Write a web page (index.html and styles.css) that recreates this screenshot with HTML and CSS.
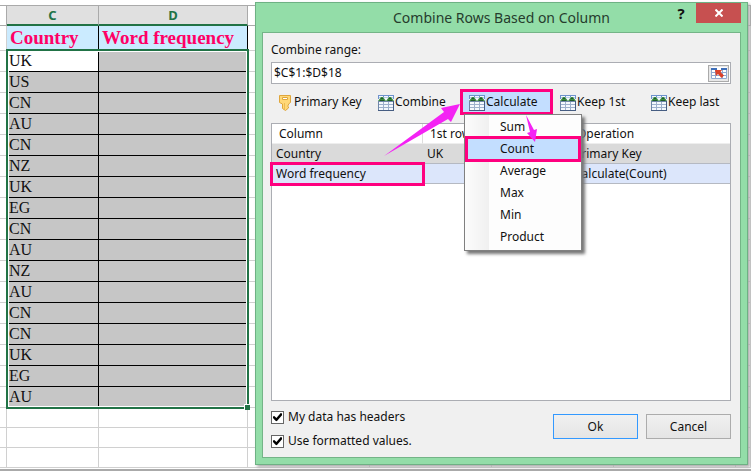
FILE: index.html
```html
<!DOCTYPE html>
<html lang="en">
<head>
<meta charset="utf-8">
<title>Combine Rows Based on Column</title>
<link rel="stylesheet" href="styles.css">
</head>
<body>
<svg class="defs" aria-hidden="true">
  <symbol id="grid-icon" viewBox="0 0 16 16">
    <path fill="#f4f8fd" d="M0 0h16v16H0z"/>
    <path fill="#6d92cc" d="M0 0h16v1H0zM0 0h1v4H0zM5 0h1v3H5zM10 0h1v3h-1zM15 0h1v4h-1z"/>
    <path fill="#b9cdea" d="M1 2h14v1H1z"/>
    <path fill="#3c8a40" d="M0 6l3-4h2l3 4zM8 6l3-4h2l3 4z"/>
    <path fill="#205c2a" d="M3 3h2v1H3zM11 3h2v1h-2zM2 5h4v1H2zM10 5h4v1h-4z"/>
    <path fill="none" stroke="#9db0cc" d="M1 9.500h14M1 12.500h14M5.500 6v9M10.500 6v9"/>
    <path fill="none" stroke="#6f86a8" d="M.5 6v9M0 6.500h16"/>
    <path fill="#465d82" d="M0 15h16v1H0zM15 6h1v10h-1z"/>
  </symbol>
</svg>
<main class="desktop">
  <div class="sheet">
    <table class="cells">
      <colgroup><col class="col-b"><col class="col-c"><col class="col-d"><col class="col-e"><col class="col-e"><col class="col-e"><col class="col-e"><col></colgroup>
      <thead>
        <tr class="top"><td colspan="8"></td></tr>
        <tr class="letters"><td></td><th>C</th><th>D</th><td colspan="5"></td></tr>
        <tr class="titles"><td></td><th>Country</th><th>Word frequency</th><td></td><td></td><td></td><td></td><td></td></tr>
      </thead>
      <tbody class="data">
        <tr><td></td><td class="active">UK</td><td></td><td></td><td></td><td></td><td></td><td></td></tr>
        <tr><td></td><td>US</td><td></td><td></td><td></td><td></td><td></td><td></td></tr>
        <tr><td></td><td>CN</td><td></td><td></td><td></td><td></td><td></td><td></td></tr>
        <tr><td></td><td>AU</td><td></td><td></td><td></td><td></td><td></td><td></td></tr>
        <tr><td></td><td>CN</td><td></td><td></td><td></td><td></td><td></td><td></td></tr>
        <tr><td></td><td>NZ</td><td></td><td></td><td></td><td></td><td></td><td></td></tr>
        <tr><td></td><td>UK</td><td></td><td></td><td></td><td></td><td></td><td></td></tr>
        <tr><td></td><td>EG</td><td></td><td></td><td></td><td></td><td></td><td></td></tr>
        <tr><td></td><td>CN</td><td></td><td></td><td></td><td></td><td></td><td></td></tr>
        <tr><td></td><td>AU</td><td></td><td></td><td></td><td></td><td></td><td></td></tr>
        <tr><td></td><td>NZ</td><td></td><td></td><td></td><td></td><td></td><td></td></tr>
        <tr><td></td><td>AU</td><td></td><td></td><td></td><td></td><td></td><td></td></tr>
        <tr><td></td><td>CN</td><td></td><td></td><td></td><td></td><td></td><td></td></tr>
        <tr><td></td><td>CN</td><td></td><td></td><td></td><td></td><td></td><td></td></tr>
        <tr><td></td><td>UK</td><td></td><td></td><td></td><td></td><td></td><td></td></tr>
        <tr><td></td><td>EG</td><td></td><td></td><td></td><td></td><td></td><td></td></tr>
        <tr><td></td><td>AU</td><td></td><td></td><td></td><td></td><td></td><td></td></tr>
      </tbody>
      <tbody class="blank">
        <tr><td></td><td></td><td></td><td></td><td></td><td></td><td></td><td></td></tr>
        <tr><td></td><td></td><td></td><td></td><td></td><td></td><td></td><td></td></tr>
        <tr><td></td><td></td><td></td><td></td><td></td><td></td><td></td><td></td></tr>
      </tbody>
    </table>
    <div class="selection"><span class="handle"></span></div>
  </div>

  <section class="dialog" role="dialog" aria-labelledby="dialog-title">
    <header class="titlebar">
      <h1 id="dialog-title">Combine Rows Based on Column</h1>
      <div class="window-buttons">
        <button class="help" type="button" aria-label="Help">?</button>
        <button class="close" type="button" aria-label="Close"><svg width="8" height="8" viewBox="0 0 8 8"><path d="M.500.500l7 7M7.500.500l-7 7" stroke="#fff" stroke-width="2"/></svg></button>
      </div>
    </header>
    <form class="panel">
      <label class="range-label" for="range">Combine range:</label>
      <div class="range">
        <input id="range" type="text" value="$C$1:$D$18">
        <button type="button" class="picker" aria-label="Select range"><svg width="16" height="12" viewBox="0 0 16 12"><path fill="#fff" d="M0 0h16v12H0z"/><path fill="#3e6eb8" d="M0 1h6v2H0zM10 1h6v2h-6z"/><path fill="none" stroke="#8fa9d2" d="M0 5.500h16M0 8.500h16M.5 3v8.500h15V3M4.500 3v8M11.500 3v8"/><path fill="#d9412b" d="M4 3h7L9.500 5l3.500 3.500-2.500 2.500-3.500-4L5 9z"/></svg></button>
      </div>
      <div class="toolbar">
        <button type="button" class="tool key"><svg width="12" height="16" viewBox="0 0 12 16"><path d="M.500.500h11v7l-2 1.500v1l-1 1 1 1v1l-3 2.500-3-2V9l-3-1.500z" fill="#ffd878" stroke="#dfa63c"/><path d="M3.500 2.500h5v2h-5z" fill="#fff" stroke="#dfa63c"/><path d="M5.500 8v6" stroke="#eebb50"/></svg>Primary Key</button>
        <button type="button" class="tool"><svg width="16" height="16"><use href="#grid-icon"/></svg>Combine</button>
        <div class="menu-anchor">
          <button type="button" class="tool selected" aria-expanded="true"><svg width="16" height="16"><use href="#grid-icon"/></svg>Calculate</button>
          <div class="menu" role="menu">
            <button type="button" role="menuitem">Sum</button>
            <button type="button" role="menuitem" class="chosen">Count</button>
            <button type="button" role="menuitem">Average</button>
            <button type="button" role="menuitem">Max</button>
            <button type="button" role="menuitem">Min</button>
            <button type="button" role="menuitem">Product</button>
          </div>
        </div>
        <button type="button" class="tool"><svg width="16" height="16"><use href="#grid-icon"/></svg>Keep 1st</button>
        <button type="button" class="tool last"><svg width="16" height="16"><use href="#grid-icon"/></svg>Keep last</button>
      </div>
      <div class="list">
        <table>
          <colgroup><col class="name"><col class="value"><col></colgroup>
          <thead><tr><th>Column</th><th>1st row</th><th>Operation</th></tr></thead>
          <tbody>
            <tr class="shaded"><td>Country</td><td>UK</td><td>Primary Key</td></tr>
            <tr class="picked"><td>Word frequency</td><td></td><td>Calculate(Count)</td></tr>
          </tbody>
        </table>
      </div>
      <footer class="bottom">
        <div class="options">
          <label><input type="checkbox" checked>My data has headers</label>
          <label><input type="checkbox" checked>Use formatted values.</label>
        </div>
        <div class="actions">
          <button type="button" class="ok">Ok</button>
          <button type="button">Cancel</button>
        </div>
      </footer>
    </form>
    <svg class="arrows" width="170" height="70" viewBox="380 95 170 70" aria-hidden="true">
      <path fill="#f423f4" d="M384 156l60-44-3-4 19-4-9 18-3-3z"/>
      <path fill="#f423f4" d="M526 115l8 15 3-1-2 13-8-9 3-1z"/>
    </svg>
  </section>
</main>
</body>
</html>
```
FILE: styles.css
```css
* { box-sizing: border-box; }
body { margin: 0; background: #fff; color: #111; font: 12px/16px "Noto Sans", sans-serif; }
button, input { font: inherit; color: inherit; margin: 0; }
button { padding: 0; border: 0; background: none; }
svg { flex: none; }
.defs { position: absolute; width: 0; height: 0; }
.desktop { position: relative; min-height: 100vh; overflow: hidden; border-bottom: 2px solid #aaa; }

.sheet { position: relative; }
.cells { width: 100%; table-layout: fixed; border-spacing: 0; font: 16px/18px "Liberation Serif", serif; }
.cells td, .cells th { padding: 0 0 0 2px; border: solid #d0d0d0; border-width: 0 1px 1px 0; text-align: left; overflow: hidden; white-space: nowrap; }
.col-b { width: 7px; }
.col-c { width: 92px; }
.col-d { width: 149px; }
.col-e { width: 122px; }
.cells .top td { height: 6px; border-color: #aaa; border-right: 0; }
.letters { height: 20px; }
.cells .letters > * { border-color: #aaa; padding: 0; }
.cells .letters th { background: #e0e0e0; border-bottom: 2px solid #217346; color: #217346; text-align: center; font: bold 13px/17px "Noto Sans", sans-serif; }
.titles { height: 25px; }
.cells .titles th { background: #cbebff; color: #ff0066; border-color: #000; padding-left: 3px; font-size: 19px; line-height: 24px; }
.data tr { height: 21px; }
.data td { line-height: 20px; }
.data td:nth-child(2), .data td:nth-child(3) { background: #c6c6c6; border-color: #000; }
.data .active.active { background: #fff; }
.blank tr { height: 20px; }
.selection { position: absolute; left: 6px; top: 49px; width: 243px; height: 360px; border: 2px solid #217346; box-shadow: inset 0 0 0 1px #fff; }
.handle { position: absolute; right: -3px; bottom: -3px; width: 6px; height: 6px; background: #217346; border: solid #fff; border-width: 1px 0 0 1px; }

.dialog { position: absolute; inset: 2px 3px 4px 255px; display: flex; flex-direction: column; padding: 0 6px 6px; border: 1px solid #6eb184; background: #93dda8; box-shadow: 2px 2px 3px #aaa; }
.titlebar { position: relative; height: 29px; }
h1 { margin: 0; text-align: center; font: 14px/29px "Noto Sans", sans-serif; color: #263c2d; }
.window-buttons { position: absolute; top: 0; right: 0; display: flex; gap: 8px; }
.help { width: 14px; height: 20px; font-weight: bold; font-size: 15px; }
.close { width: 45px; height: 20px; background: #c75050; }
.panel { flex: 1; display: flex; flex-direction: column; padding: 9px 9px 0 8px; border: 1px solid #74b487; background: #f0f0f0; }
.range-label { line-height: 16px; }
.range { display: flex; align-items: center; height: 22px; margin-top: 4px; padding-right: 1px; border: 1px solid #abadb3; background: #fff; }
.range input { flex: 1; min-width: 0; padding: 0 2px; border: 0; background: none; outline: 0; }
.picker { display: flex; align-items: center; justify-content: center; width: 21px; height: 17px; border: 1px solid #aaa; background: #e8e8e8; }
.toolbar { display: flex; height: 24px; margin-top: 6px; }
.tool { display: flex; align-items: center; gap: 1px; width: 91px; height: 24px; padding-left: 8px; white-space: nowrap; }
.tool svg { margin-top: 2px; }
.tool.key { gap: 3px; width: 99px; }
.tool.last { width: auto; }
.menu-anchor { position: relative; }
.tool.selected { outline: 3px solid #ff007f; outline-offset: -2px; background: #c3deff; }
.menu { position: absolute; z-index: 1; top: 24px; left: 3px; width: 118px; padding: 1px 2px 2px; border: 1px solid #808080; background: linear-gradient(90deg, #fcfcfc, #f0f0f0 24px, #fdfdfd 24px); box-shadow: 3px 3px 3px #777; }
.menu button { display: block; width: 100%; height: 22px; padding-left: 33px; text-align: left; }
.menu .chosen { outline: 3px solid #ff007f; outline-offset: -1px; background: #c3deff; }
.list { flex: 1; margin-top: 9px; border: 1px solid #abadb3; background: #fff; }
.list table { width: 100%; table-layout: fixed; border-spacing: 0; }
.list .name { width: 151px; }
.list .value { width: 147px; }
.list th, .list td { height: 20px; padding: 0 4px; text-align: left; font-weight: normal; line-height: 19px; border-bottom: 1px solid #b5b9c2; }
.list th { padding-left: 7px; border-bottom-color: #eee; border-right: 1px solid #ddd; }
.list th:last-child { border-right: 0; }
.shaded { background: #dadada; }
.picked { background: #dce6fb; }
.picked td:first-child { outline: 3px solid #ff007f; outline-offset: -1px; }
.bottom { display: flex; justify-content: space-between; margin-top: 8px; height: 48px; }
.options { display: flex; flex-direction: column; gap: 8px; }
.options label { display: flex; align-items: center; gap: 4px; }
.options input { appearance: none; display: grid; place-items: center; width: 13px; height: 13px; border: 1px solid #666; background: #fff; }
.options input:checked::before { content: ""; width: 9px; height: 9px; background: #000; clip-path: polygon(0 44%, 14% 38%, 38% 62%, 86% 6%, 100% 12%, 100% 30%, 42% 96%, 28% 92%, 0 60%); }
.actions { display: flex; gap: 8px; margin-top: 5px; }
.actions button { width: 85px; height: 25px; border: 1px solid #acacac; background: linear-gradient(#f0f0f0, #e5e5e5); }
.actions .ok { border-color: #3399ff; }
.arrows { position: absolute; z-index: 2; left: 124px; top: 92px; pointer-events: none; }
```
